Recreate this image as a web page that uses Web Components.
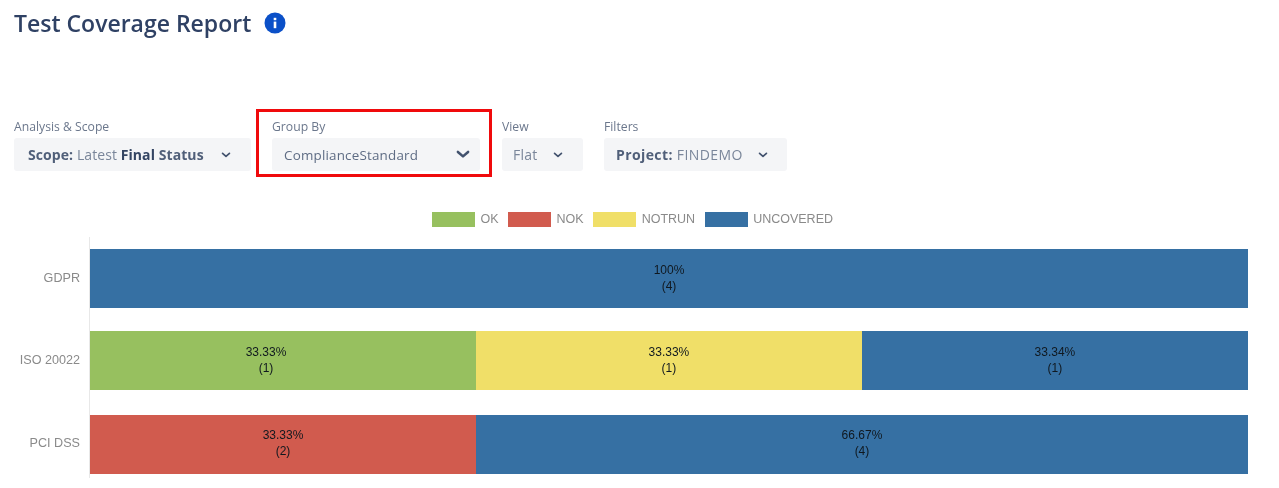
<!DOCTYPE html>
<html>
<head>
<meta charset="utf-8">
<title>Test Coverage Report</title>
<style>
  html, body { margin: 0; background: #fff; }
  body { font-family: "Open Sans", "Liberation Sans", sans-serif; }
</style>
</head>
<body>
<coverage-report>
  <report-title slot="title">Test Coverage Report</report-title>

  <filter-group slot="filters" label="Analysis &amp; Scope" width="237" pad="14 20" spacing="0.08">
    <b>Scope:</b>&nbsp;Latest&nbsp;<b class="dark">Final</b>&nbsp;<b>Status</b>
  </filter-group>
  <filter-group slot="filters" label="Group By" width="208" gap="21" pad="12 10" highlight large-chevron>
    ComplianceStandard
  </filter-group>
  <filter-group slot="filters" label="View" width="81" gap="22" pad="11 20">Flat</filter-group>
  <filter-group slot="filters" label="Filters" width="183" gap="21" pad="12 19" spacing="0.4">
    <b>Project:</b>&nbsp;FINDEMO
  </filter-group>

  <chart-legend slot="chart"></chart-legend>
  <stacked-chart slot="chart">
    <chart-row label="GDPR">
      <chart-segment color="uncovered" share="100" pct="100%" count="(4)"></chart-segment>
    </chart-row>
    <chart-row label="ISO 20022">
      <chart-segment color="ok" share="33.33" pct="33.33%" count="(1)" offset="34"></chart-segment>
      <chart-segment color="notrun" share="33.33" pct="33.33%" count="(1)"></chart-segment>
      <chart-segment color="uncovered" share="33.34" pct="33.34%" count="(1)"></chart-segment>
    </chart-row>
    <chart-row label="PCI DSS">
      <chart-segment color="nok" share="33.33" pct="33.33%" count="(2)"></chart-segment>
      <chart-segment color="uncovered" share="66.67" pct="66.67%" count="(4)"></chart-segment>
    </chart-row>
  </stacked-chart>
</coverage-report>

<script>
const COLORS = {
  ok: '#97c05f',
  nok: '#d15b4e',
  notrun: '#f0df68',
  uncovered: '#3670a3',
};

class CoverageReport extends HTMLElement {
  constructor() {
    super();
    const shadow = this.attachShadow({ mode: 'open' });
    shadow.innerHTML = `
    <style>
    :host {
      display: block;
      width: 1279px;
      height: 488px;
      overflow: hidden;
      box-sizing: border-box;
      filter: blur(0.7px);
    }
    .filters {
      display: flex;
      margin: 72px 0 0 14px;
    }
    </style>
    <slot name="title"></slot>
    <div class="filters"><slot name="filters"></slot></div>
    <slot name="chart"></slot>
    `;
  }
}

class ReportTitle extends HTMLElement {
  constructor() {
    super();
    const shadow = this.attachShadow({ mode: 'open' });
    shadow.innerHTML = `
    <style>
    :host {
      display: flex;
      align-items: center;
      height: 46px;
      padding-left: 14px;
      color: #2f4164;
      font: 600 23px/46px "Open Sans", sans-serif;
    }
    svg { margin-left: 13px; }
    </style>
    <slot></slot>
    <svg width="22" height="22" viewBox="0 0 22 22">
      <circle cx="11" cy="11" r="10.5" fill="#0b50c8"/>
      <rect x="9.7" y="9.6" width="2.6" height="6.6" fill="#fff"/>
      <rect x="9.7" y="5.8" width="2.6" height="2.4" fill="#fff"/>
    </svg>
    `;
  }
}

class FilterGroup extends HTMLElement {
  constructor() {
    super();
    const shadow = this.attachShadow({ mode: 'open' });
    const label = this.getAttribute('label') || '';
    const width = this.getAttribute('width') || '100';
    const gap = this.getAttribute('gap') || '0';
    const pad = (this.getAttribute('pad') || '12 20').split(' ');
    const spacing = this.getAttribute('spacing') || '0.2';
    const large = this.hasAttribute('large-chevron');

    shadow.innerHTML = `
    <style>
    :host {
      display: block;
      position: relative;
      width: ${width}px;
      margin-left: ${gap}px;
      font-family: "Open Sans", sans-serif;
    }
    :host([highlight])::after {
      content: '';
      position: absolute;
      left: -16px;
      right: -12px;
      top: -9px;
      bottom: -6px;
      border: 3.5px solid #f00a0c;
    }
    .label {
      height: 19px;
      padding-top: 1px;
      color: #6b778c;
      font-size: 12.2px;
      line-height: 16px;
      white-space: nowrap;
    }
    .box {
      display: flex;
      align-items: center;
      justify-content: space-between;
      box-sizing: border-box;
      height: 33px;
      padding: 0 ${pad[1]}px 0 ${pad[0]}px;
      background: #f4f5f7;
      border-radius: 3px;
      color: ${large ? '#5e6c84' : '#7a869a'};
      font-size: ${large ? 13.4 : 14}px;
      letter-spacing: ${spacing}px;
      white-space: nowrap;
    }
    .value { display: flex; align-items: center; }
    ::slotted(b) { font-weight: 700; color: #505f79; }
    ::slotted(b.dark) { color: #344563; }
    svg { flex: none; }
    </style>
    <div class="label">${label.replace('&', '&amp;')}</div>
    <div class="box">
      <span class="value"><slot></slot></span>
      <svg width="${large ? 14 : 10}" height="${large ? 9 : 6}" viewBox="0 0 11 7">
        <path d="M1.5 1.5 L5.5 5 L9.5 1.5" fill="none" stroke="#42526e" stroke-width="2" stroke-linecap="round" stroke-linejoin="round"/>
      </svg>
    </div>
    `;
  }
}

class ChartLegend extends HTMLElement {
  constructor() {
    super();
    const shadow = this.attachShadow({ mode: 'open' });
    const items = [
      ['OK', 'ok'],
      ['NOK', 'nok'],
      ['NOTRUN', 'notrun'],
      ['UNCOVERED', 'uncovered'],
    ];
    shadow.innerHTML = `
    <style>
    :host {
      display: flex;
      justify-content: flex-start;
      gap: 9.5px;
      margin: 41px 0 0 432px;
      height: 15px;
      color: #8a8a8a;
      font: 12.5px/15px "Liberation Sans", sans-serif;
    }
    .item { display: flex; align-items: center; gap: 5.5px; }
    i { display: block; width: 43px; height: 15px; }
    </style>
    ${items
      .map((it) => `<div class="item"><i style="background:${COLORS[it[1]]}"></i><span>${it[0]}</span></div>`)
      .join('')}
    `;
  }
}

class StackedChart extends HTMLElement {
  constructor() {
    super();
    const shadow = this.attachShadow({ mode: 'open' });
    shadow.innerHTML = `
    <style>
    :host {
      display: flex;
      flex-direction: column;
      gap: 23px;
      position: relative;
      width: 1248px;
      margin-top: 10px;
      padding: 12px 0 4px;
    }
    :host::before {
      content: '';
      position: absolute;
      left: 89px;
      top: 0;
      bottom: 0;
      width: 1px;
      background: #e8e8e8;
    }
    ::slotted(chart-row:last-child) { margin-top: 2px; }
    </style>
    <slot></slot>
    `;
  }
}

class ChartRow extends HTMLElement {
  constructor() {
    super();
    const shadow = this.attachShadow({ mode: 'open' });
    const label = this.getAttribute('label') || '';
    shadow.innerHTML = `
    <style>
    :host {
      display: flex;
      height: 59px;
    }
    .label {
      flex: none;
      width: 80px;
      padding: 0 10px 2px 0;
      text-align: right;
      align-self: center;
      color: #8a8a8a;
      font: 12.6px/16px "Liberation Sans", sans-serif;
    }
    :host(:last-child) .label { padding-bottom: 3px; }
    :host(:last-child) ::slotted(chart-segment) { padding-bottom: 3px; }
    .bar { flex: 1; display: flex; }
    </style>
    <div class="label">${label}</div>
    <div class="bar"><slot></slot></div>
    `;
  }
}

class ChartSegment extends HTMLElement {
  constructor() {
    super();
    const shadow = this.attachShadow({ mode: 'open' });
    const color = COLORS[this.getAttribute('color')] || '#ccc';
    const share = this.getAttribute('share') || '0';
    const pct = this.getAttribute('pct') || '';
    const count = this.getAttribute('count') || '';
    const offset = this.getAttribute('offset') || '0';
    shadow.innerHTML = `
    <style>
    :host {
      display: flex;
      flex-direction: column;
      align-items: center;
      justify-content: center;
      box-sizing: border-box;
      width: ${share}%;
      padding-right: ${offset}px;
      padding-bottom: 2px;
      background: ${color};
      color: #10181f;
      font: 12px/16px "Liberation Sans", sans-serif;
    }
    span { display: block; }
    </style>
    <span>${pct}</span>
    <span>${count}</span>
    `;
  }
}

customElements.define('coverage-report', CoverageReport);
customElements.define('report-title', ReportTitle);
customElements.define('filter-group', FilterGroup);
customElements.define('chart-legend', ChartLegend);
customElements.define('stacked-chart', StackedChart);
customElements.define('chart-row', ChartRow);
customElements.define('chart-segment', ChartSegment);
</script>
</body>
</html>
